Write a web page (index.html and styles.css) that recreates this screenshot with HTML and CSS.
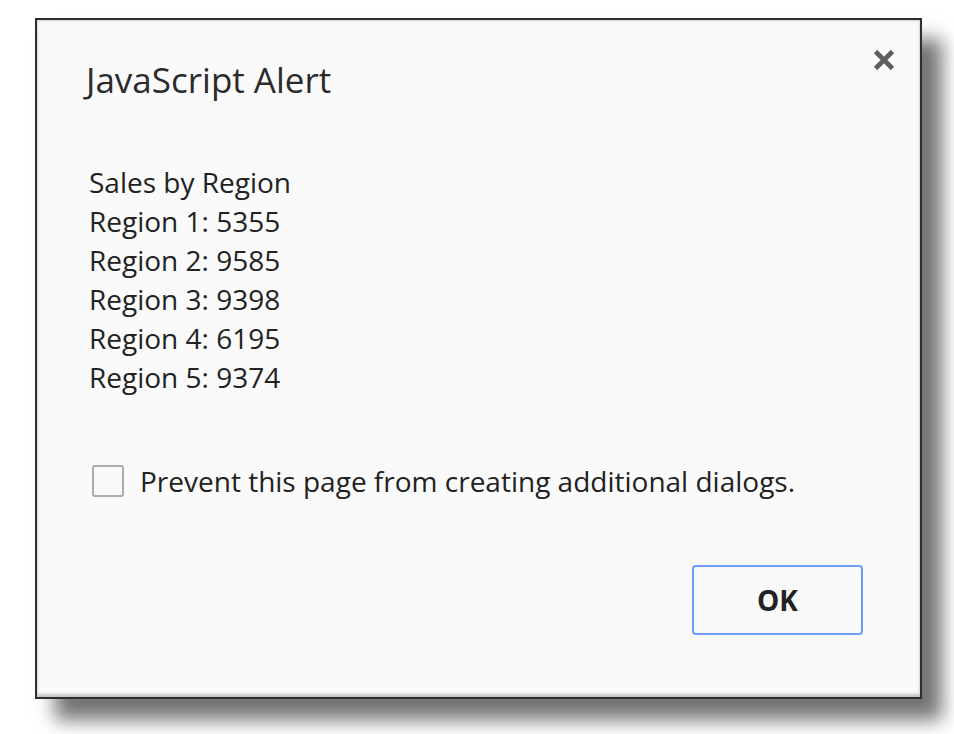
FILE: index.html
```html
<!DOCTYPE html>
<html>
<head>
<meta charset="utf-8">
<link rel="stylesheet" href="styles.css">
</head>
<body>
<div class="stage">
  <div class="dialog">
    <div class="header">
      <div class="title">JavaScript Alert</div>
      <div class="close">
        <svg width="22" height="22" viewBox="0 0 22 22"><path d="M2.5 2.5 L19.5 19.5 M19.5 2.5 L2.5 19.5" stroke="#5f5f5f" stroke-width="4.6" fill="none"/></svg>
      </div>
    </div>
    <div class="message">
      <div>Sales by Region</div>
      <div>Region 1: 5355</div>
      <div>Region 2: 9585</div>
      <div>Region 3: 9398</div>
      <div>Region 4: 6195</div>
      <div>Region 5: 9374</div>
    </div>
    <div class="prevent">
      <span class="box"></span>
      <span class="label">Prevent this page from creating additional dialogs.</span>
    </div>
    <div class="actions">
      <div class="ok">OK</div>
    </div>
  </div>
</div>
</body>
</html>
```
FILE: styles.css
```css
html, body {
  margin: 0;
  padding: 0;
  background: #ffffff;
}
body {
  font-family: "Open Sans", "Noto Sans", sans-serif;
  color: #222;
}
.stage {
  box-sizing: border-box;
  min-height: 734px;
  padding: 18px 0 0 35px;
}
.dialog {
  box-sizing: border-box;
  width: 887px;
  height: 681px;
  background: #fafafa;
  border: 2px solid #2e2e2e;
  box-shadow:
    inset 2px 2px 2px -1px #d6d6d6,
    inset 0 -4px 3px -1px #c4c4c4,
    inset -1px 0 2px #dcdcdc,
    20px 21px 18px rgba(0, 0, 0, 0.55);
  padding: 0 57px 0 52px;
}
.header {
  display: flex;
  justify-content: space-between;
  align-items: flex-start;
}
.title {
  margin-top: 40px;
  margin-left: -3px;
  font-size: 35px;
  line-height: 40px;
  color: #2b2b2b;
}
.close {
  margin-top: 29px;
  margin-right: -32px;
  width: 22px;
  height: 22px;
}
.close svg {
  display: block;
}
.message {
  margin-top: 63px;
  font-size: 28px;
  line-height: 39px;
}
.prevent {
  margin-top: 65px;
  display: flex;
  align-items: flex-start;
  font-size: 28px;
  line-height: 39px;
}
.box {
  box-sizing: border-box;
  width: 32px;
  height: 32px;
  margin-top: 3px;
  margin-left: 3px;
  border: 2px solid #adadad;
  border-radius: 3px;
  background: #f8f8f8;
  box-shadow: 0 0 1px #cfcfcf;
}
.label {
  margin-left: 16px;
}
.actions {
  margin-top: 64px;
  display: flex;
  justify-content: flex-end;
}
.ok {
  box-sizing: border-box;
  width: 171px;
  height: 70px;
  border: 2px solid #6d9df5;
  border-radius: 4px;
  background: #fafafa;
  display: flex;
  align-items: center;
  justify-content: center;
  font-weight: bold;
  font-size: 28px;
  color: #222;
}
```
